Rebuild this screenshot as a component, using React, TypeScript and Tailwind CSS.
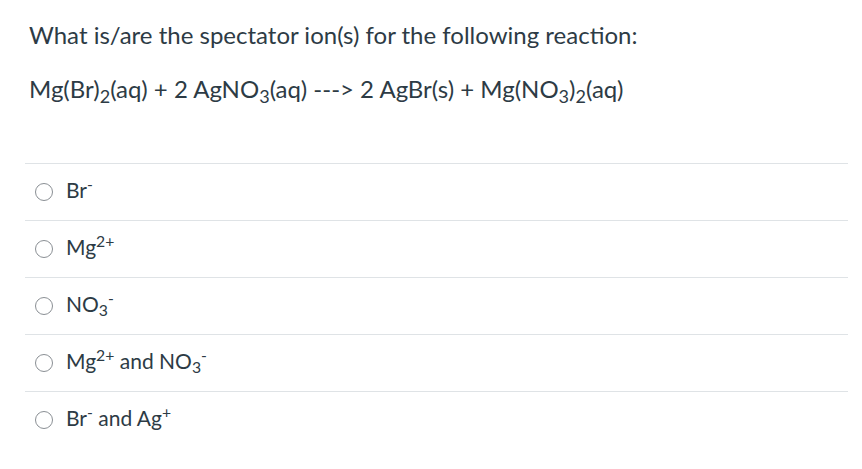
import React from 'react';

const answers: React.ReactNode[] = [
  <>Br<sup>-</sup></>,
  <>Mg<sup>2+</sup></>,
  <>NO<sub>3</sub><sup>-</sup></>,
  <>Mg<sup>2+</sup> and NO<sub>3</sub><sup>-</sup></>,
  <>Br<sup>-</sup> and Ag<sup>+</sup></>,
];

const AnswerRow: React.FC<{ children: React.ReactNode }> = ({ children }) => (
  <div className="flex items-center h-[57px] border-t border-[#dfe3e6]">
    <span className="ml-[10px] w-[18px] h-[18px] rounded-full border border-[#8a8f94] bg-white shrink-0"></span>
    <span className="ml-[13px] pb-[4px] text-[21px] text-[#2d3b45]">{children}</span>
  </div>
);

export default function App() {
  return (
    <div className="w-[862px] h-[469px] bg-white font-['Lato','Liberation_Sans',sans-serif] text-[#2d3b45]">
      <div className="pl-[29px] pt-[19px]">
        <p className="text-[24px] leading-[32px]">What is/are the spectator ion(s) for the following reaction:</p>
        <p className="text-[24px] leading-[32px] mt-[22px]">
          Mg(Br)<sub>2</sub>(aq) + 2 AgNO<sub>3</sub>(aq) ---&gt; 2 AgBr(s) + Mg(NO<sub>3</sub>)<sub>2</sub>(aq)
        </p>
      </div>
      <div className="ml-[25px] w-[823px] mt-[58px]">
        {answers.map((a, i) => (
          <AnswerRow key={i}>{a}</AnswerRow>
        ))}
      </div>
    </div>
  );
}
